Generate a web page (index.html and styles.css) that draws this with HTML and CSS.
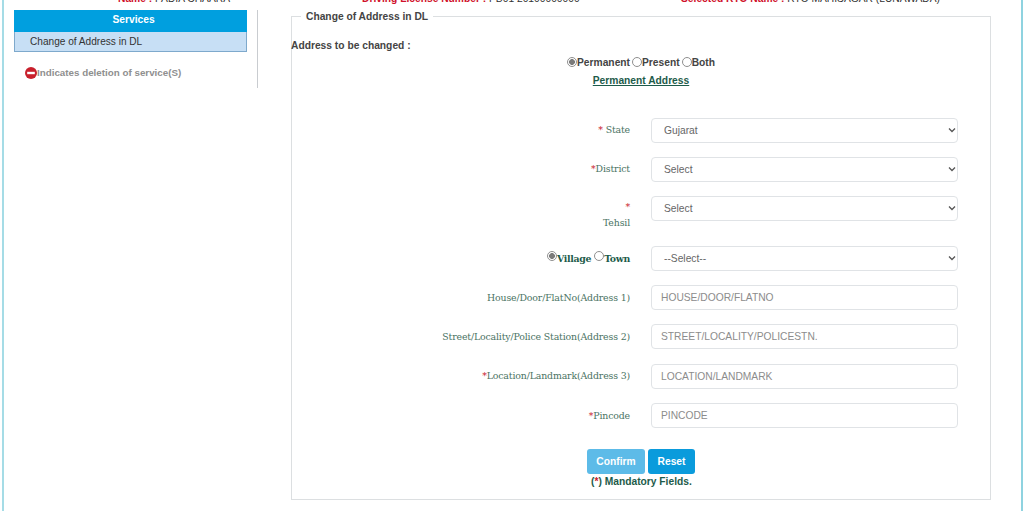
FILE: index.html
```html
<!DOCTYPE html>
<html lang="en">
<head>
<meta charset="utf-8">
<title>Change of Address in DL</title>
<link rel="stylesheet" href="styles.css">
</head>
<body>
<div class="page">
  <div class="summary">
    <span class="sum sum-a"><b>Name :</b> PADIA CHAARA</span>
    <span class="sum sum-b"><b>Driving License Number :</b> PB01 20100000000</span>
    <span class="sum sum-c"><b>Selected RTO Name :</b> RTO MAHISAGAR (LUNAWADA)</span>
  </div>
  <div class="main">
    <aside class="side">
      <div class="services">
        <div class="services-head">Services</div>
        <div class="services-item">Change of Address in DL</div>
      </div>
      <div class="legend">
        <svg class="minus" viewBox="0 0 12 12" aria-hidden="true"><circle cx="6" cy="6" r="6" fill="#c8202c"/><rect x="2.2" y="4.8" width="7.6" height="2.4" fill="#fff"/></svg><span>Indicates deletion of service(S)</span>
      </div>
    </aside>
    <fieldset class="box">
      <legend>Change of Address in DL</legend>
      <div class="addr-title">Address to be changed :</div>
      <div class="radios">
        <label><input type="radio" name="a" checked>Permanent</label>
        <label><input type="radio" name="a">Present</label>
        <label><input type="radio" name="a">Both</label>
      </div>
      <div class="perm">Permanent Address</div>
      <div class="form">
        <div class="row r-state">
          <div class="lab"><i>*</i> State</div>
          <div class="ctl"><select><option>Gujarat</option></select></div>
        </div>
        <div class="row r-district">
          <div class="lab"><i>*</i>District</div>
          <div class="ctl"><select><option>Select</option></select></div>
        </div>
        <div class="row r-tehsil">
          <div class="lab tall"><i>*</i><br>Tehsil</div>
          <div class="ctl"><select><option>Select</option></select></div>
        </div>
        <div class="row r-village">
          <div class="lab strong"><input type="radio" name="v" checked>Village <input type="radio" name="v">Town</div>
          <div class="ctl"><select><option>--Select--</option></select></div>
        </div>
        <div class="row">
          <div class="lab">House/Door/FlatNo(Address 1)</div>
          <div class="ctl"><input type="text" placeholder="HOUSE/DOOR/FLATNO"></div>
        </div>
        <div class="row">
          <div class="lab">Street/Locality/Police Station(Address 2)</div>
          <div class="ctl"><input type="text" placeholder="STREET/LOCALITY/POLICESTN."></div>
        </div>
        <div class="row">
          <div class="lab"><i>*</i>Location/Landmark(Address 3)</div>
          <div class="ctl"><input type="text" placeholder="LOCATION/LANDMARK"></div>
        </div>
        <div class="row">
          <div class="lab"><i>*</i>Pincode</div>
          <div class="ctl"><input type="text" placeholder="PINCODE"></div>
        </div>
      </div>
      <div class="actions">
        <div class="btns">
          <button class="btn btn-off" type="button">Confirm</button>
          <button class="btn" type="button">Reset</button>
        </div>
        <div class="mand">(<i>*</i>) Mandatory Fields.</div>
      </div>
    </fieldset>
  </div>
</div>
</body>
</html>
```
FILE: styles.css
```css
* { box-sizing: border-box; }
html, body { margin: 0; padding: 0; background: #fff; }
body { height: 511px; overflow: hidden; font-family: "Liberation Sans", Arial, sans-serif; font-size: 10.25px; color: #444; }
.page { height: 511px; margin: 0 0 0 2px; width: 1021px; border-left: 2px solid #a5dce6; border-right: 2px solid #8fd3e0; overflow: hidden; }
.summary { height: 10px; position: relative; overflow: hidden; line-height: 10px; }
.sum { position: absolute; top: -6px; white-space: nowrap; color: #333; }
.sum b { color: #d0112b; }
.sum-a { left: 114px; }
.sum-b { left: 358px; }
.sum-c { left: 677px; }
.main { display: flex; align-items: flex-start; }
.side { width: 244px; margin-left: 10px; flex: none; height: 78px; border-right: 1px solid #c9ccd0; }
.services { width: 233px; border: 1px solid #7ea9cc; border-top: 0; background: #c7dff5; }
.services-head { height: 22px; margin: 0 -1px; padding-left: 6px; background: #009fdf; color: #fff; font-weight: bold; line-height: 20px; text-align: center; }
.services-item { height: 19px; padding-left: 15px; font-size: 10.1px; line-height: 19px; color: #333; }
.legend { display: flex; align-items: center; margin: 15px 0 0 11px; font-size: 9.8px; font-weight: bold; color: #8f8f8f; }
.legend span { position: relative; top: -1px; }
.minus { width: 12px; height: 12px; }
.box { margin: 0 0 0 33px; padding: 0; width: 700px; height: 490px; border: 1px solid #dcdfe1; min-width: 0; }
.box legend { margin-left: 9px; padding: 0 5px; font-weight: bold; color: #444; line-height: 13px; }
.addr-title { font-weight: bold; color: #444; margin: 16px 0 0 -1px; line-height: 13px; }
.radios { display: flex; justify-content: center; margin: 4px 0 0 0; font-weight: bold; line-height: 14px; gap: 2px; }
.radios label { display: flex; align-items: flex-start; }
input[type=radio] { appearance: none; width: 10px; height: 10px; margin: 1px 0 0 0; border: 1px solid #8f8f8f; border-radius: 50%; background: #fff; }
input[type=radio]:checked { background: radial-gradient(circle, #7a7a7a 0 2.6px, #fff 3.2px); }
.perm { text-align: center; font-weight: bold; color: #1d5b4a; text-decoration: underline; line-height: 14px; margin-top: 4px; }
.form { margin-top: 29px; display: flex; flex-direction: column; gap: 13.4px; }
.row { display: flex; height: 26px; align-items: center; }
.r-tehsil { height: 36px; align-items: flex-start; }
.lab { width: 338px; text-align: right; font-family: "DejaVu Serif", serif; font-size: 9.4px; letter-spacing: -0.15px; color: #4a7363; line-height: 14px; white-space: nowrap; }
.lab i { color: #c8202c; font-style: normal; }
.tall { line-height: 16px; padding-top: 3px; }
.strong { font-weight: bold; color: #1d5b4a; letter-spacing: -0.3px; }
.strong input { vertical-align: 1px; }
.ctl { margin-left: 21px; width: 307px; }
.ctl select, .ctl input[type=text] { width: 100%; height: 25px; border: 1px solid #e0e3e6; border-radius: 4px; background-color: #fff; font-family: "Liberation Sans", Arial, sans-serif; font-size: 10.25px; color: #666; }
.ctl select { appearance: none; padding-left: 12px; background-image: url("data:image/svg+xml,%3Csvg xmlns='http://www.w3.org/2000/svg' viewBox='0 0 8 6'%3E%3Cpath d='M1 1.5 4 4.5 7 1.5' fill='none' stroke='%23555' stroke-width='1.3'/%3E%3C/svg%3E"); background-repeat: no-repeat; background-position: right 1px center; background-size: 8px 6px; }
.ctl input[type=text] { padding-left: 9px; }
.ctl input::placeholder { color: #8c8c8c; opacity: 1; }
.actions { margin: 20px 0 0 295px; }
.btns { display: flex; gap: 3px; }
.btn { height: 25px; width: 47px; border: 0; border-radius: 3px; background: #0a9bdc; color: #fff; font-family: inherit; font-size: 10.25px; font-weight: bold; padding: 0; }
.btn-off { width: 58px; background: #5dbbe8; }
.mand { margin: 1px 0 0 4px; font-weight: bold; color: #1d5b4a; line-height: 13px; }
.mand i { color: #c8202c; font-style: normal; }
```
